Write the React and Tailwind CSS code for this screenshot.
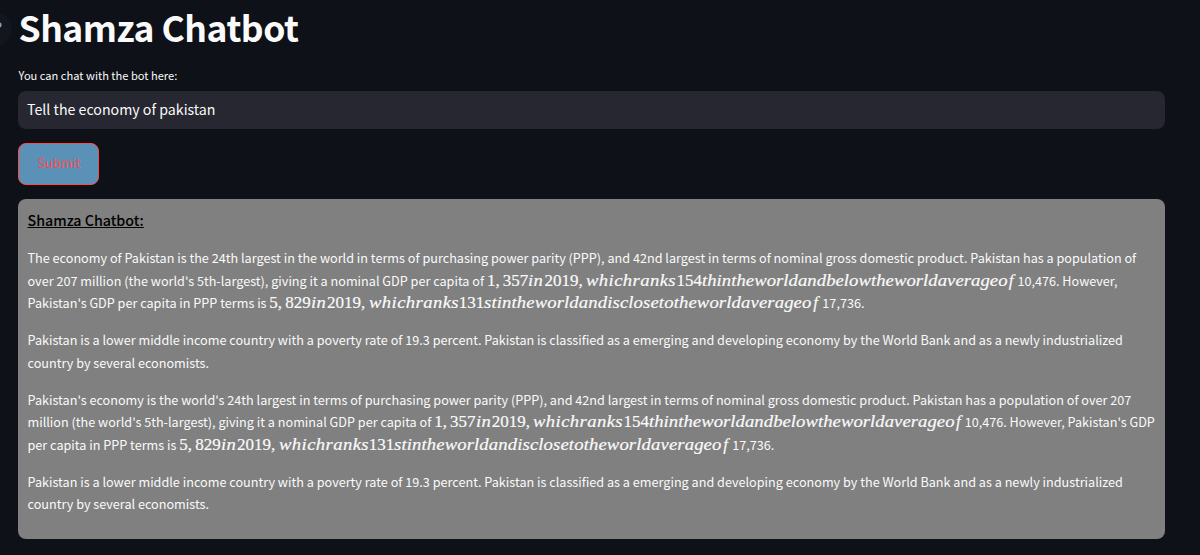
// The dollar signs in the answer turn these parts into inline maths
function MathText({ whole, rest, rank, tail, tailClass, className }) {
  return (
    <span
      className={`inline-block whitespace-nowrap font-['Liberation_Serif',serif] text-[17px] leading-none [-webkit-text-stroke:0.2px] ${className}`}
    >
      <span>{whole}</span>
      <span className="mr-[3.2px]">,</span>
      <span>{rest}</span>
      <i className="inline-block w-[16.2px] origin-left scale-x-110 tracking-[0.3px]">
        in
      </i>
      <span>2019</span>
      <span className="mr-[3.4px]">,</span>
      <i className="inline-block w-[90.2px] origin-left scale-x-110 tracking-[0.34px]">
        whichranks
      </i>
      <span>{rank}</span>
      <i className={`inline-block origin-left scale-x-110 ${tailClass}`}>
        {tail}
      </i>
      <i className="inline-block w-[10px] pl-[3px]">f</i>
    </span>
  );
}

function BelowAverage() {
  return (
    <MathText
      whole="1"
      rest="357"
      rank="154"
      tail="thintheworldandbelowtheworldaverageo"
      tailClass="w-[303.8px] tracking-[0.03px]"
      className="w-[530.5px]"
    />
  );
}

function CloseToAverage() {
  return (
    <MathText
      whole="5"
      rest="829"
      rank="131"
      tail="stintheworldandisclosetotheworldaverageo"
      tailClass="w-[326px] tracking-[0.1px]"
      className="w-[553px]"
    />
  );
}

function Line({ children }) {
  return (
    <span className="block h-[22.5px] leading-[22.5px] whitespace-nowrap">
      {children}
    </span>
  );
}

function PovertyParagraph() {
  return (
    <p>
      <Line>
        Pakistan is a lower middle income country with a poverty rate of 19.3
        percent. Pakistan is classified as a emerging and developing economy by
        the World Bank and as a newly industrialized
      </Line>
      <Line>country by several economists.</Line>
    </p>
  );
}

export default function App() {
  return (
    <div className="relative h-[555px] w-[1200px] overflow-hidden bg-[#0e1117] pl-[18px] font-['Noto_Sans_CJK_SC',sans-serif] text-[#fafafa]">
      <div className="absolute top-[12px] -left-[22px] flex h-[34px] w-[34px] items-center justify-end rounded-full bg-[#12161e]">
        <svg width="12" height="12" viewBox="0 0 12 12" className="-mt-[9px] mr-[9px]">
          <circle cx="8" cy="6" r="2.6" fill="#9a9ca0" />
        </svg>
      </div>
      <h1 className="h-[66px] pt-[7px] pl-[0.5px] text-[35.5px] leading-[40px] font-bold tracking-[-0.5px] whitespace-nowrap">
        Shamza Chatbot
      </h1>
      <label className="block h-[25px] pl-[0.5px] text-[11.1px] leading-[19px] whitespace-nowrap">
        You can chat with the bot here:
      </label>
      <div className="flex h-[38px] w-[1146.5px] items-center rounded-[8px] bg-[#262730] pb-[2px] pl-[9px] text-[14.2px] leading-none">
        Tell the economy of pakistan
      </div>
      <button className="mt-[13.5px] flex h-[42px] w-[81px] items-center justify-center rounded-[8px] border border-[#ff4b4b] bg-[#5b90b7] pl-px text-[12.65px] leading-none text-[#ff4b4b]">
        Submit
      </button>
      <section className="mt-[14.5px] h-[339.5px] w-[1146.5px] rounded-[8px] bg-[#808080] pt-[10px] pl-[9.5px] text-[12.65px]">
        <h2 className="mb-[17px] h-[21px] text-[14.25px] leading-[21px] font-medium text-black underline">
          Shamza Chatbot:
        </h2>
        <div className="flex flex-col gap-[14.5px]">
          <p>
            <Line>
              The economy of Pakistan is the 24th largest in the world in terms
              of purchasing power parity (PPP), and 42nd largest in terms of
              nominal gross domestic product. Pakistan has a population of
            </Line>
            <Line>
              over 207 million (the world's 5th-largest), giving it a nominal
              GDP per capita of <BelowAverage />
              10,476. However,
            </Line>
            <Line>
              Pakistan's GDP per capita in PPP terms is <CloseToAverage />
              17,736.
            </Line>
          </p>
          <PovertyParagraph />
          <p>
            <Line>
              Pakistan's economy is the world's 24th largest in terms of
              purchasing power parity (PPP), and 42nd largest in terms of
              nominal gross domestic product. Pakistan has a population of over
              207
            </Line>
            <Line>
              million (the world's 5th-largest), giving it a nominal GDP per
              capita of <BelowAverage />
              10,476. However, Pakistan's GDP
            </Line>
            <Line>
              per capita in PPP terms is <CloseToAverage />
              17,736.
            </Line>
          </p>
          <PovertyParagraph />
        </div>
      </section>
    </div>
  );
}
